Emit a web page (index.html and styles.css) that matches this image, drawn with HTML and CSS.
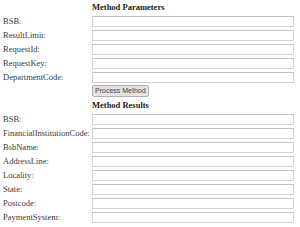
FILE: index.html
```html
<!DOCTYPE html>
<html lang="en">
<head>
    <meta charset="UTF-8">
    <title>Method Test</title>
    <link rel="stylesheet" href="styles.css">
</head>
<body>
    <table class="method-table">
        <tr class="title-row"><td></td><th class="section-title">Method Parameters</th></tr>
        <tr><td class="label">BSB:</td><td><input class="field" type="text"></td></tr>
        <tr><td class="label">ResultLimit:</td><td><input class="field" type="text"></td></tr>
        <tr><td class="label">RequestId:</td><td><input class="field" type="text"></td></tr>
        <tr><td class="label">RequestKey:</td><td><input class="field" type="text"></td></tr>
        <tr><td class="label">DepartmentCode:</td><td><input class="field" type="text"></td></tr>
        <tr><td></td><td><button class="process-btn" type="button">Process Method</button></td></tr>
        <tr class="title-row results"><td></td><th class="section-title">Method Results</th></tr>
        <tr><td class="label">BSB:</td><td><input class="field" type="text"></td></tr>
        <tr><td class="label">FinancialInstitutionCode:</td><td><input class="field" type="text"></td></tr>
        <tr><td class="label">BsbName:</td><td><input class="field" type="text"></td></tr>
        <tr><td class="label">AddressLine:</td><td><input class="field" type="text"></td></tr>
        <tr><td class="label">Locality:</td><td><input class="field" type="text"></td></tr>
        <tr><td class="label">State:</td><td><input class="field" type="text"></td></tr>
        <tr><td class="label">Postcode:</td><td><input class="field" type="text"></td></tr>
        <tr><td class="label">PaymentSystem:</td><td><input class="field" type="text"></td></tr>
    </table>
</body>
</html>
```

FILE: styles.css
```css
body {
    margin: 0;
    padding: 0 3px;
    font-family: "Liberation Serif", "Times New Roman", serif;
    font-size: 8.5px;
    color: #3a3a3a;
    background: #fff;
}
.method-table {
    border-collapse: collapse;
}
.method-table td,
.method-table th {
    padding: 0;
    height: 14px;
    vertical-align: middle;
}
.method-table .title-row th {
    height: 13px;
}
.method-table .results th {
    height: 12px;
}
.label {
    width: 89px;
    white-space: nowrap;
}
.section-title {
    text-align: left;
    font-weight: bold;
    color: #1a1a1a;
}
.field {
    display: block;
    box-sizing: border-box;
    width: 202px;
    height: 11px;
    margin: 0;
    padding: 0;
    border: 1px solid #d2d2d2;
    border-top-color: #c2c2c2;
    background: #fff;
}
.process-btn {
    display: block;
    box-sizing: border-box;
    height: 12px;
    margin: 1px 0;
    padding: 0 2px;
    font-family: "Liberation Sans", Arial, sans-serif;
    font-size: 7px;
    line-height: 10px;
    color: #444;
    background: #e3e3e3;
    border: 1px solid #b0b0b0;
    border-radius: 2px;
}
```
